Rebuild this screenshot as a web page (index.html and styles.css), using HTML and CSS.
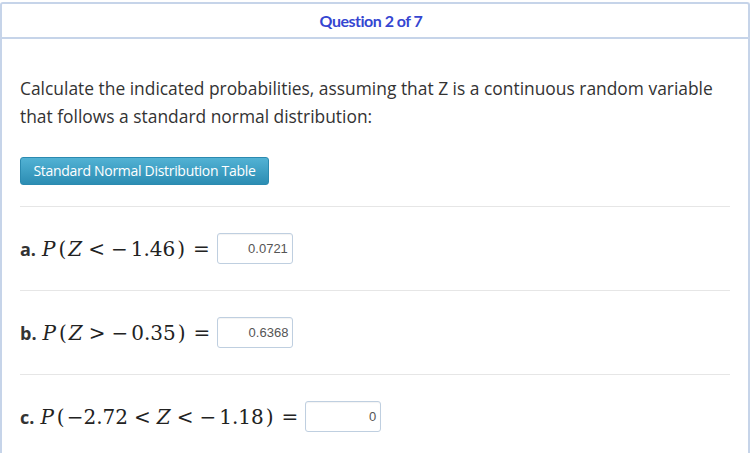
FILE: index.html
```html
<!DOCTYPE html>
<html>
<head>
<meta charset="utf-8">
<link rel="stylesheet" href="styles.css">
</head>
<body>
<div class="frame">
  <div class="header">Question 2 of 7</div>
  <div class="content">
    <p class="intro">Calculate the indicated probabilities, assuming that Z is a continuous random variable that follows a standard normal distribution:</p>
    <button class="table-btn">Standard Normal Distribution Table</button>
    <div class="row">
      <span class="label">a.</span>
      <span class="math"><i class="p">P</i><span class="paren">(</span><i>Z</i><span class="rel">&lt;</span><span class="minus">−</span>1.46<span class="paren">)</span><span class="rel last">=</span></span>
      <span class="answer">0.0721</span>
    </div>
    <div class="row">
      <span class="label">b.</span>
      <span class="math"><i class="p">P</i><span class="paren">(</span><i>Z</i><span class="rel">&gt;</span><span class="minus">−</span>0.35<span class="paren">)</span><span class="rel last">=</span></span>
      <span class="answer">0.6368</span>
    </div>
    <div class="row">
      <span class="label">c.</span>
      <span class="math"><i class="p">P</i><span class="paren">(</span>−2.72<span class="rel">&lt;</span><i>Z</i><span class="rel">&lt;</span><span class="minus">−</span>1.18<span class="paren">)</span><span class="rel last">=</span></span>
      <span class="answer">0</span>
    </div>
  </div>
</div>
</body>
</html>
```
FILE: styles.css
```css
html, body {
  margin: 0;
  padding: 0;
  background: #ffffff;
  overflow: hidden;
}
body {
  padding-top: 2px;
  font-family: "Open Sans", "DejaVu Sans", sans-serif;
  color: #333333;
}
.frame {
  border: 2px solid #c6d4e9;
  border-bottom: none;
  border-radius: 3px 3px 0 0;
  height: 460px;
  box-sizing: border-box;
}
.header {
  height: 33px;
  border-bottom: 2px solid #c6d4e9;
  display: flex;
  align-items: center;
  justify-content: center;
  padding-right: 8px;
  font-family: "Lato", "Open Sans", sans-serif;
  font-weight: bold;
  font-size: 16px;
  color: #3546d1;
  letter-spacing: -0.5px;
}
.content {
  padding: 0 18px 0 18px;
}
.intro {
  margin: 35px 0 0 0;
  font-size: 17.4px;
  line-height: 28px;
  color: #333333;
}
.table-btn {
  margin-top: 27px;
  display: block;
  height: 28px;
  width: 249px;
  padding: 0 0 1px 0;
  border: 1px solid #2b8ab0;
  border-radius: 3px;
  background: linear-gradient(#52b2d4, #2c8db3);
  color: #ffffff;
  font-family: "Open Sans", sans-serif;
  font-size: 14px;
  letter-spacing: -0.3px;
  cursor: pointer;
}
.row {
  margin-top: 21px;
  border-top: 1px solid #e6e6e6;
  height: 83px;
  display: flex;
  align-items: center;
  margin-bottom: -21px;
}
.label {
  font-weight: bold;
  font-size: 18px;
  margin-right: 6px;
}
.math {
  font-family: "DejaVu Serif", "Liberation Serif", serif;
  font-size: 20px;
  color: #222222;
  display: flex;
  align-items: center;
  white-space: pre;
}
.math i {
  font-style: italic;
}
.p {
  margin-right: 1px;
}
.paren {
  margin: 0 2px;
}
.rel {
  margin: 0 6px;
}
.rel.last {
  margin: 0 5px 0 6px;
}
.minus {
  margin-right: 3px;
}
.answer {
  margin-left: 2px;
  width: 70px;
  height: 29px;
  border: 1px solid #bfcfe0;
  border-radius: 3px;
  box-sizing: content-box;
  display: flex;
  align-items: center;
  justify-content: flex-end;
  padding-right: 4px;
  font-family: "Liberation Sans", Arial, sans-serif;
  font-size: 13px;
  color: #555555;
  box-shadow: inset 0 1px 1px rgba(0,0,0,0.05);
}
```
